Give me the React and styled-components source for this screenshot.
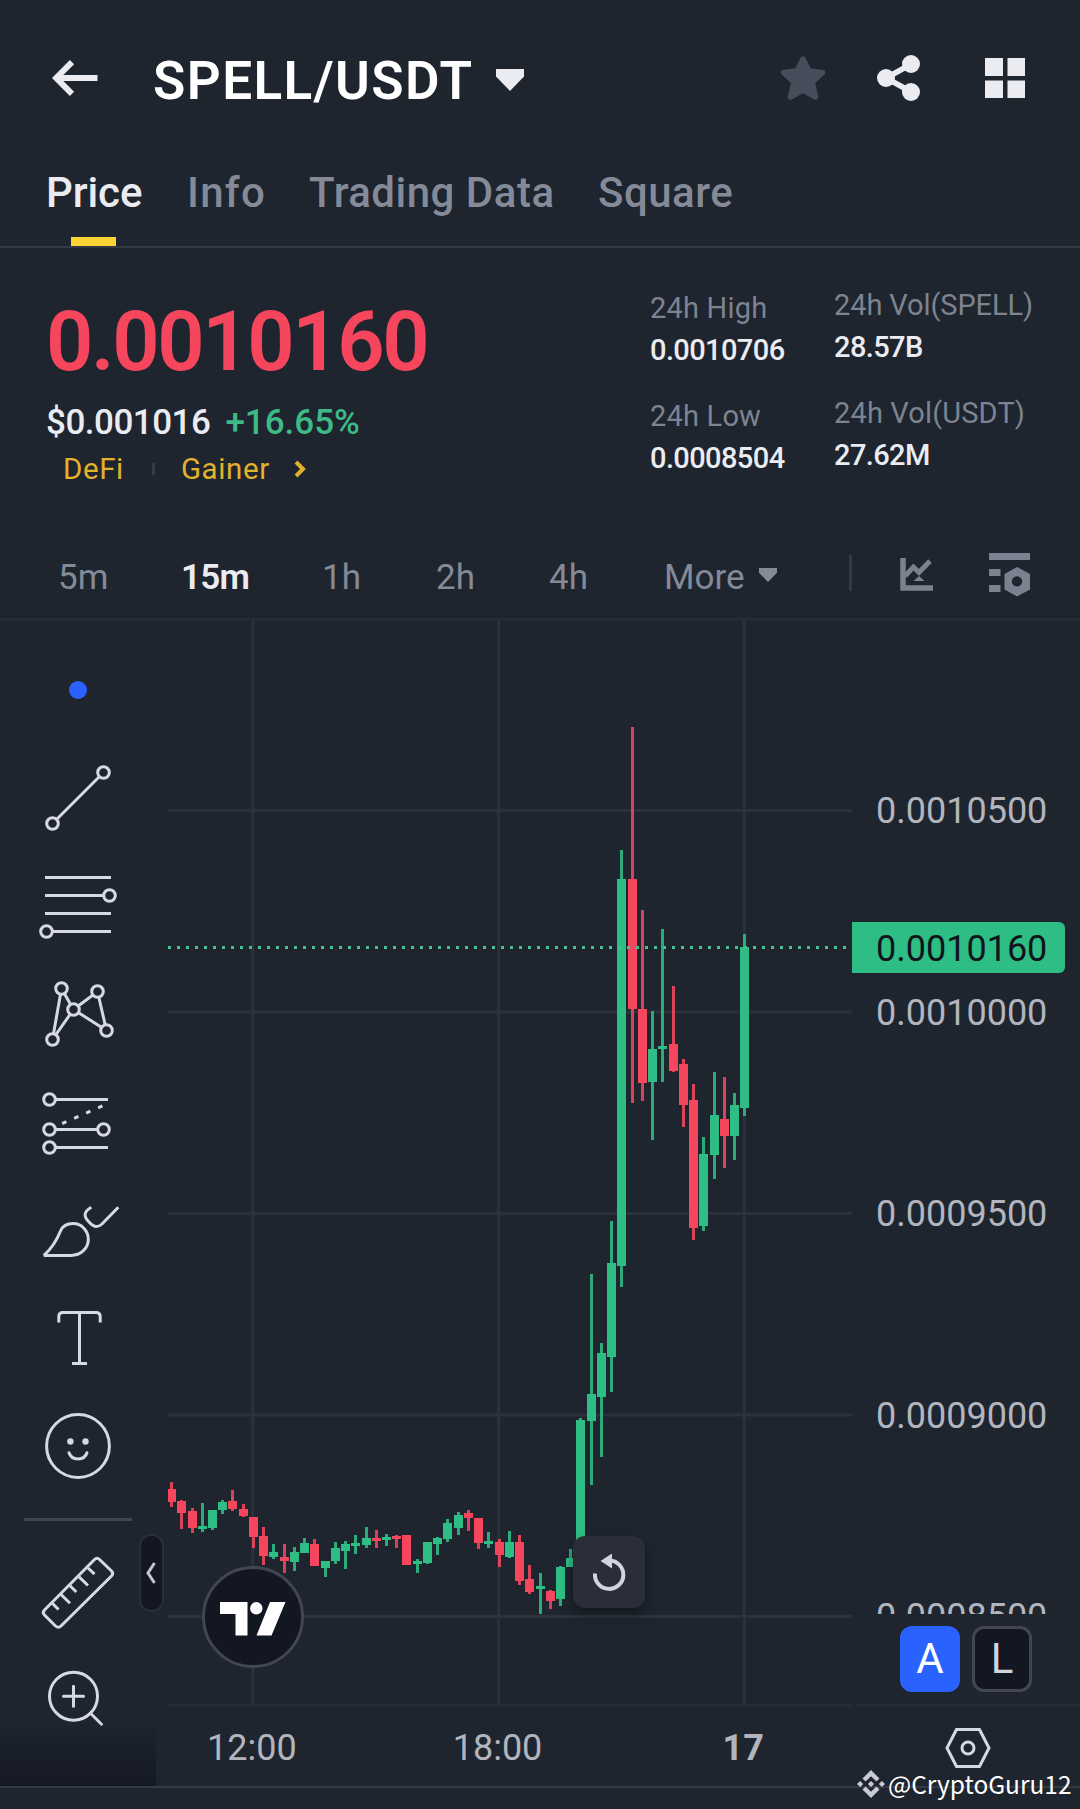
import React, { useState } from 'react';
import styled, { createGlobalStyle, css } from 'styled-components';

const GlobalStyle = createGlobalStyle`
    * { box-sizing: border-box; }
    body {
        margin: 0;
        background: #1e252f;
        font-family: Roboto, "Liberation Sans", sans-serif;
    }
`

const Page = styled.div`
    position: relative;
    width: 1080px;
    height: 1809px;
    overflow: hidden;
    background: #1e252f;
    color: #eaecf2;
`

/* ---------- header ---------- */

const Header = styled.header`
    display: flex;
    align-items: center;
    height: 156px;
    padding: 0 55px 0 52px;
`

const Pair = styled.h1`
    display: flex;
    align-items: center;
    gap: 23px;
    margin: 5px auto 0 55px;
    font-size: 53px;
    line-height: 62px;
    font-weight: 600;
    letter-spacing: 1.4px;
    color: #fff;

    svg { margin-bottom: 2px; }
`

const HeaderIcons = styled.div`
    display: flex;
    align-items: center;
`

const IconBox = styled.div`
    display: flex;
    margin-left: ${p => p.$gap || 0}px;
`

const Tabs = styled.nav`
    display: grid;
    grid-template-columns: 141px 122px 289px auto;
    justify-content: start;
    height: 92px;
    padding-left: 46px;
    border-bottom: 2px solid #343a45;
`

const Tab = styled.div`
    display: flex;
    flex-direction: column;
    align-items: flex-start;
    padding-top: 12px;
    font-size: 42px;
    line-height: 50px;
    font-weight: 500;
    letter-spacing: ${p => p.$ls || 0}px;
    color: ${p => p.$active ? '#eaecf2' : '#848a97'};
    white-space: nowrap;
    cursor: pointer;
`

const Indicator = styled.span`
    width: 45px;
    height: 9px;
    margin: auto 0 0 25px;
    background: #fcd535;
`

/* ---------- price summary ---------- */

const Summary = styled.section`
    display: flex;
    height: 286px;
`

const PriceBlock = styled.div`
    width: 650px;
    padding: 49px 0 0 46px;
`

const LastPrice = styled.div`
    font-size: 83px;
    line-height: 90px;
    font-weight: 600;
    letter-spacing: -2.4px;
    color: #f6465d;
`

const SubPrice = styled.div`
    display: flex;
    gap: 15px;
    margin-top: 14px;
    font-size: 35px;
    line-height: 44px;
    font-weight: 500;
`

const UsdPrice = styled.span`
    letter-spacing: -0.5px;
`

const Change = styled.span`
    color: #3dba86;
`

const TagRow = styled.div`
    display: flex;
    align-items: center;
    margin-top: 6px;
    padding-left: 17px;
    font-size: 29.5px;
    line-height: 36px;
    letter-spacing: 0.6px;
    color: #e3b22c;
`

const TagDivider = styled.i`
    width: 3px;
    height: 12px;
    margin: 0 26px 0 28px;
    background: #363c47;
`

const StatColumn = styled.dl`
    width: 184px;
    margin: 0;
    padding-top: ${p => p.$top}px;
    font-size: 29px;
    line-height: 42px;
    white-space: nowrap;
`

const StatLabel = styled.dt`
    letter-spacing: ${p => p.$ls || 0}px;
    color: #7d8390;
`

const StatValue = styled.dd`
    margin: 0 0 24px;
    font-weight: 500;
    letter-spacing: -0.6px;
    color: #eaecf2;
`

/* ---------- interval bar ---------- */

const IntervalBar = styled.div`
    display: grid;
    grid-template-columns: 123px 141px 114px 113px 115px 185px 51px 89px auto;
    align-items: center;
    justify-content: start;
    height: 87px;
    padding-left: 58px;
    border-bottom: 3px solid #262c37;

    > svg { margin-bottom: 3px; }
`

const Interval = styled.span`
    display: flex;
    align-items: center;
    gap: 14px;
    padding-top: 3px;
    font-size: 35px;
    line-height: 44px;
    color: #848a97;
    cursor: pointer;
    ${p => p.$active && css`
        font-weight: 600;
        letter-spacing: -0.8px;
        color: #eaecf2;
    `}

    svg { margin-bottom: 6px; }
`

const BarDivider = styled.i`
    width: 3px;
    height: 36px;
    margin-bottom: 6px;
    background: #343a45;
`

/* ---------- chart ---------- */

const ChartArea = styled.main`
    display: flex;
    height: 1167px;
    border-bottom: 2px solid #343a45;
`

const Toolbar = styled.aside`
    position: relative;
    width: 168px;
    height: 1165px;
    padding-top: 15px;
    overflow: hidden;
`

const Tool = styled.div`
    display: flex;
    align-items: center;
    justify-content: center;
    width: 156px;
    height: 108px;
`

const ToolDot = styled.span`
    width: 18px;
    height: 18px;
    border-radius: 50%;
    background: #2962ff;
`

const ToolDivider = styled.div`
    width: 108px;
    height: 3px;
    margin: 18px 24px;
    background: #434651;
`

const ToolFade = styled.div`
    position: absolute;
    left: 0;
    bottom: 0;
    width: 156px;
    height: 66px;
    background: linear-gradient(to bottom, rgba(19, 23, 34, 0), rgba(19, 23, 34, 0.9));
`

const CollapseHandle = styled.div`
    position: absolute;
    top: 913px;
    left: 139px;
    display: flex;
    align-items: center;
    justify-content: center;
    width: 25px;
    height: 78px;
    padding-right: 1px;
    border: 2px solid #2a2e39;
    border-radius: 12px;
    background: #131722;
`

const PlotColumn = styled.div`
    position: relative;
    width: 684px;
`

const Plot = styled.svg`
    display: block;
`

const TimeAxis = styled.div`
    display: flex;
    height: 82px;
    border-top: 3px solid #262c37;
`

const TimeLabel = styled.span`
    flex: none;
    width: 245.7px;
    padding-top: 2px;
    font-size: 36px;
    line-height: 79px;
    font-weight: ${p => p.$bold ? 700 : 400};
    text-align: center;
    color: #b2b5be;

    &:first-child { margin-left: -39px; }
`

const TvBadge = styled.div`
    position: absolute;
    top: 945px;
    left: 34px;
    display: flex;
    align-items: center;
    justify-content: center;
    width: 102px;
    height: 102px;
    padding-top: 3px;
    border: 3px solid #434651;
    border-radius: 50%;
    background: #131722;
`

const ResetButton = styled.div`
    position: absolute;
    top: 915px;
    left: 405px;
    width: 72px;
    height: 72px;
    border-radius: 12px;
    background: #2a2e39;
    box-shadow: 0 6px 12px rgba(0, 0, 0, 0.35);
`

const PriceAxis = styled.div`
    position: relative;
    width: 228px;
`

const PriceLabels = styled.div`
    height: 993px;
    padding-top: 90px;
    overflow: hidden;
`

const PriceLabel = styled.div`
    height: 201.6px;
    padding-left: 24px;
    font-size: 36px;
    line-height: 201.6px;
    color: #b2b5be;
`

const CurrentPrice = styled.div`
    position: absolute;
    top: 301px;
    left: 0;
    width: 213px;
    height: 51px;
    padding-left: 24px;
    border-radius: 0 6px 6px 0;
    font-size: 36px;
    line-height: 54px;
    color: #10151c;
    background: #2ebd85;
`

const ScaleButtons = styled.div`
    display: flex;
    gap: 12px;
    height: 90px;
    padding: 12px 0 0 48px;
`

const ScaleButton = styled.button`
    width: 60px;
    height: 66px;
    padding: 0;
    border: 3px solid ${p => p.$on ? '#2962ff' : '#434651'};
    border-radius: 12px;
    font: 42px/58px Roboto, sans-serif;
    color: ${p => p.$on ? '#fff' : '#d1d4dc'};
    background: ${p => p.$on ? '#2962ff' : '#131722'};
`

const AxisCorner = styled.div`
    display: flex;
    justify-content: center;
    height: 82px;
    margin-left: 3px;
    padding-top: 21px;
    border-top: 3px solid #262c37;
`

const Watermark = styled.div`
    position: absolute;
    top: 1767px;
    left: 857px;
    display: flex;
    align-items: center;
    gap: 3px;
    height: 34px;
    font-family: "Noto Sans CJK SC", "Noto Sans", sans-serif;
    font-size: 24.5px;
    line-height: 34px;
    white-space: nowrap;
    color: #fff;
`

// [wick top, body top, body bottom, wick bottom, up?], oldest first
const candles = [
    [1482, 1488.7, 1502.3, 1507, 0],
    [1500, 1501, 1513, 1529, 0],
    [1508, 1511, 1528, 1533, 0],
    [1503, 1526, 1529, 1532, 1],
    [1510, 1510, 1528, 1530.3, 1],
    [1500, 1502, 1510, 1514, 1],
    [1490, 1501, 1509, 1511, 0],
    [1504, 1509, 1516, 1517, 0],
    [1517, 1517, 1537, 1548, 0],
    [1527, 1536, 1556, 1565, 0],
    [1544, 1552, 1557, 1559, 1],
    [1544, 1557, 1560.7, 1573, 0],
    [1547, 1552, 1562, 1571, 1],
    [1538, 1543, 1553, 1553, 1],
    [1539, 1543.7, 1566, 1566, 0],
    [1561, 1561, 1568, 1577, 1],
    [1542, 1548, 1561, 1564, 1],
    [1541, 1544, 1551.3, 1569, 1],
    [1535, 1543, 1546, 1554, 1],
    [1527, 1538, 1545.3, 1548, 1],
    [1530, 1538, 1541, 1547.7, 0],
    [1534, 1537, 1540, 1546, 1],
    [1534.7, 1535.7, 1538.7, 1547.7, 0],
    [1535, 1535, 1565, 1565, 0],
    [1559, 1561, 1564, 1573, 1],
    [1542, 1542, 1563, 1564, 1],
    [1537, 1538.4, 1543.8, 1555, 1],
    [1519, 1523, 1539, 1542, 1],
    [1512, 1515, 1528, 1535, 1],
    [1510, 1513, 1518, 1531, 0],
    [1518, 1518, 1543, 1549, 0],
    [1532, 1541, 1544, 1548, 1],
    [1539, 1542, 1555, 1567, 0],
    [1531, 1542, 1557, 1558, 1],
    [1535, 1542, 1581, 1585, 0],
    [1565, 1579, 1591.5, 1593.7, 0],
    [1573, 1586, 1589, 1614, 1],
    [1590, 1591, 1601, 1609, 0],
    [1566, 1566.6, 1599, 1606, 1],
    [1549, 1558, 1567, 1567, 1],
    [1418, 1420, 1570, 1570, 1],
    [1274, 1394, 1421, 1485, 1],
    [1343, 1353, 1397, 1457, 1],
    [1221, 1263, 1357, 1392, 1],
    [850, 879, 1266, 1287, 1],
    [727, 879, 1009, 1103, 0],
    [910, 1009, 1083, 1101, 0],
    [1011, 1049, 1082, 1140, 1],
    [929, 1046, 1049, 1082, 1],
    [986, 1044, 1071, 1072, 0],
    [1059, 1064, 1105, 1127, 0],
    [1084, 1100, 1228, 1240, 0],
    [1137, 1154, 1226, 1231, 1],
    [1072, 1115, 1155, 1179, 1],
    [1077, 1118.5, 1136, 1168, 0],
    [1093, 1105, 1136, 1160, 1],
    [934, 947, 1108, 1116, 1],
];

const CANDLE_STEP = 10.235;
const LAST_X = 744.25;
const gridX = [252.8, 498.6, 744.2];
const gridY = [810.5, 1012, 1213.5, 1415, 1616.5];
const priceTicks = ['0.0010500', '0.0010000', '0.0009500', '0.0009000', '0.0008500'];

const tools = [
    'trend', 'fib', 'pattern', 'forecast', 'brush', 'text', 'smile',
];

const Node = ({ x, y }) => <circle cx={x} cy={y} r="5.8" fill="#1e252f" />;

const toolShapes = {
    trend: <>
        <path d="M67.5 16.5 16.5 67.5" />
        <Node x={67.5} y={16.5} /><Node x={16.5} y={67.5} />
    </>,
    fib: <>
        <path d="M9 13.5H75M9 31.5H73M9 49.5H75M10 67.5H75" />
        <Node x={73.5} y={31.5} /><Node x={10.5} y={67.5} />
    </>,
    pattern: <>
        <path d="M16.5 67.5 25.5 16.5 37.5 37.5 61.5 19.5 70.5 58.5 37.5 37.5Z" />
        <Node x={25.5} y={16.5} /><Node x={61.5} y={19.5} /><Node x={37.5} y={37.5} />
        <Node x={16.5} y={67.5} /><Node x={70.5} y={58.5} />
    </>,
    forecast: <>
        <path d="M13.5 19.5H72M13.5 49.5H67M13.5 67.5H72" />
        <path d="M26.2 43.6 68 25.2" strokeDasharray="4.6 8.5" />
        <Node x={13.5} y={19.5} /><Node x={13.5} y={49.5} />
        <Node x={67.5} y={49.5} /><Node x={13.5} y={67.5} />
    </>,
    brush: <>
        <path strokeLinejoin="bevel" d="M8 67.4H35C45 67.4 52.3 60 52.3 51.5 52.3 42.5 45.5 35.6 37 35.6 30 35.6 26.5 38.5 24.5 43 20.5 53 15 61 8 67.4Z" />
        <path d="M55.3 19.3C47 24 48 29 52.5 33.5 58 39.5 61.5 40 66 36L82.3 19.3" />
    </>,
    text: <path d="M22.8 26.5V20.5Q22.8 16.5 26.8 16.5H60Q64.2 16.5 64.2 20.5V26.5M43.5 16.5V67.5M36 67.5H51" />,
    smile: <>
        <circle cx="42" cy="42" r="31.4" />
        <circle cx="34.4" cy="37.5" r="3.2" fill="#d6d9e2" stroke="none" />
        <circle cx="49.5" cy="37.5" r="3.2" fill="#d6d9e2" stroke="none" />
        <path d="M33 48.8C35.5 57 48.5 57 51 48.8" strokeLinecap="round" />
    </>,
    ruler: <>
        <path strokeLinejoin="round" d="M58.5 8.5Q61 6 63.5 8.5L75.5 20Q78 22.5 75.5 25L25 75Q22.3 77.5 19.5 75L8.5 64Q6 61.5 8.5 59Z" />
        <path d="M16.3 52.2 22.5 58.5M25 43.5 34 52.3M34 34.7 40.3 41M43 25.8 52 34.5M52 17 58.5 23.2" />
    </>,
    zoom: <>
        <circle cx="37.5" cy="37.2" r="24" />
        <path d="M27.5 37.2H47.5M37.5 27.2V47.2M54.7 54.5 65.5 65.2" strokeLinecap="round" />
    </>,
};

function ToolIcon({ name }) {
    return (
        <Tool>
            <svg width="84" height="84" viewBox="0 0 84 84" fill="none" stroke="#d6d9e2" strokeWidth="3">
                {toolShapes[name]}
            </svg>
        </Tool>
    );
}

function Caret({ width, height, color }) {
    return (
        <svg width={width} height={height} viewBox="0 0 28 22" preserveAspectRatio="none">
            <path d="M0 0H28V7.5L14 22 0 7.5Z" fill={color} />
        </svg>
    );
}

function CandlePlot() {
    return (
        <Plot width="684" height="1083" viewBox="168 621 684 1083">
            <g stroke="#2b323d" strokeWidth="3">
                {gridX.map(x => <path key={x} d={`M${x} 621V1704`} />)}
                {gridY.map(y => <path key={y} d={`M168 ${y}H852`} />)}
            </g>
            {candles.map(([high, top, bottom, low, up], i) => {
                const x = Math.ceil(LAST_X - (candles.length - 1 - i) * CANDLE_STEP - 1.5);
                return (
                    <g key={i} fill={up ? '#2ebd85' : '#f6465d'} shapeRendering="crispEdges">
                        <rect x={x} y={high} width="3" height={low - high} opacity="0.88" />
                        <rect x={x - 3} y={top} width="9" height={bottom - top} />
                    </g>
                );
            })}
            <path d="M168 947.5H852" stroke="#45c08f" strokeWidth="3" strokeDasharray="3 6" />
        </Plot>
    );
}

export default function App() {
    const [tab, setTab] = useState('Price');
    const [interval, setActiveInterval] = useState('15m');

    return (
        <Page>
            <GlobalStyle />
            <Header>
                <svg width="46" height="36" viewBox="0 0 46 36" fill="none" stroke="#eaecf2" strokeWidth="6">
                    <path d="M45.5 18H5M20 2.2 4.2 18 20 33.8" />
                </svg>
                <Pair>
                    SPELL/USDT
                    <Caret width={28} height={22} color="#eaecf2" />
                </Pair>
                <HeaderIcons>
                    <IconBox>
                        <svg width="46" height="46" viewBox="0 0 46 46">
                            <path
                                d="M23 4 28.7 16 42.5 17.5 32.2 27 35.5 42 23 35 10.5 42 13.8 27 3.5 17.5 17.3 16Z"
                                fill="#474d5a" stroke="#474d5a" strokeWidth="5.5" strokeLinejoin="round"
                            />
                        </svg>
                    </IconBox>
                    <IconBox $gap={51}>
                        <svg width="43" height="46" viewBox="0 0 43 46" fill="#eaecf2">
                            <path d="M34.5 9 9 23 34.5 37" fill="none" stroke="#eaecf2" strokeWidth="5.5" />
                            <circle cx="34" cy="9" r="9" />
                            <circle cx="9" cy="23" r="9" />
                            <circle cx="34" cy="37" r="9" />
                        </svg>
                    </IconBox>
                    <IconBox $gap={65}>
                        <svg width="40" height="40" viewBox="0 0 40 40" fill="#eaecf2">
                            <path d="M0 0H18V18H0ZM22.5 0H40V18H22.5ZM0 22.5H18V40H0ZM22.5 22.5H40V40H22.5Z" />
                        </svg>
                    </IconBox>
                </HeaderIcons>
            </Header>

            <Tabs>
                {[['Price', -0.1], ['Info', 1.3], ['Trading Data', 0.5], ['Square', 0.5]].map(([name, ls]) => (
                    <Tab key={name} $ls={ls} $active={tab === name} onClick={() => setTab(name)}>
                        {name}
                        {tab === name && <Indicator />}
                    </Tab>
                ))}
            </Tabs>

            <Summary>
                <PriceBlock>
                    <LastPrice>0.0010160</LastPrice>
                    <SubPrice>
                        <UsdPrice>$0.001016</UsdPrice>
                        <Change>+16.65%</Change>
                    </SubPrice>
                    <TagRow>
                        <span>DeFi</span>
                        <TagDivider />
                        <span>Gainer</span>
                        <IconBox $gap={24}>
                            <svg width="13" height="18" viewBox="0 0 13 18" fill="none" stroke="#e3b22c" strokeWidth="4">
                                <path d="M2 2 9 9 2 16" />
                            </svg>
                        </IconBox>
                    </TagRow>
                </PriceBlock>
                <StatColumn $top={39}>
                    <StatLabel $ls={0.2}>24h High</StatLabel>
                    <StatValue>0.0010706</StatValue>
                    <StatLabel $ls={0.2}>24h Low</StatLabel>
                    <StatValue>0.0008504</StatValue>
                </StatColumn>
                <StatColumn $top={36}>
                    <StatLabel $ls={-0.1}>24h Vol(SPELL)</StatLabel>
                    <StatValue>28.57B</StatValue>
                    <StatLabel $ls={0.15}>24h Vol(USDT)</StatLabel>
                    <StatValue>27.62M</StatValue>
                </StatColumn>
            </Summary>

            <IntervalBar>
                {['5m', '15m', '1h', '2h', '4h'].map(name => (
                    <Interval key={name} $active={interval === name} onClick={() => setActiveInterval(name)}>
                        {name}
                    </Interval>
                ))}
                <Interval>
                    More
                    <Caret width={18} height={14} color="#848a97" />
                </Interval>
                <BarDivider />
                <svg width="33" height="34" viewBox="0 0 33 34" fill="none" stroke="#7b818e" strokeWidth="5.5">
                    <path d="M3 0V30H33" />
                    <path d="M5 18 13.5 9 19 14.5 30 3" strokeWidth="5" />
                    <path d="M13.5 23 19 18 24.5 23Z" fill="#7b818e" stroke="none" />
                </svg>
                <svg width="41" height="44" viewBox="0 0 41 44" fill="#7b818e">
                    <path d="M0 0H41V7H0ZM0 16H11.5V23H0ZM0 32H11.5V39H0Z" />
                    <path fillRule="evenodd" d="M28 14 41 21V36.5L28 43.5 15.5 36.5V21ZM28 23.2A5.2 5.2 0 1 0 28 33.6 5.2 5.2 0 1 0 28 23.2Z" />
                </svg>
            </IntervalBar>

            <ChartArea>
                <Toolbar>
                    <Tool><ToolDot /></Tool>
                    {tools.map(name => <ToolIcon key={name} name={name} />)}
                    <ToolDivider />
                    <ToolIcon name="ruler" />
                    <ToolIcon name="zoom" />
                    <ToolFade />
                    <CollapseHandle>
                        <svg width="12" height="24" viewBox="0 0 12 24" fill="none" stroke="#c4c7d0" strokeWidth="3">
                            <path d="M9.5 2 3 12 9.5 22" />
                        </svg>
                    </CollapseHandle>
                </Toolbar>

                <PlotColumn>
                    <CandlePlot />
                    <TimeAxis>
                        <TimeLabel>12:00</TimeLabel>
                        <TimeLabel>18:00</TimeLabel>
                        <TimeLabel $bold>17</TimeLabel>
                    </TimeAxis>
                    <TvBadge>
                        <svg width="66" height="34" viewBox="0 0 66 34" fill="#fff">
                            <path d="M0 0H27.5V33.5H15.5V12H0ZM50 0H65.5L51.5 33.5H36.5Z" />
                            <circle cx="36.3" cy="6.3" r="6.2" />
                        </svg>
                    </TvBadge>
                    <ResetButton>
                        <svg width="72" height="72" viewBox="0 0 72 72" fill="none" stroke="#d1d4dc" strokeWidth="4">
                            <path d="M22 37.5A14.2 14.2 0 1 0 36.5 24.5" />
                            <path d="M27.5 25 39 17.5V32.5Z" fill="#d1d4dc" stroke="none" />
                        </svg>
                    </ResetButton>
                </PlotColumn>

                <PriceAxis>
                    <PriceLabels>
                        {priceTicks.map(p => <PriceLabel key={p}>{p}</PriceLabel>)}
                    </PriceLabels>
                    <CurrentPrice>0.0010160</CurrentPrice>
                    <ScaleButtons>
                        <ScaleButton $on>A</ScaleButton>
                        <ScaleButton>L</ScaleButton>
                    </ScaleButtons>
                    <AxisCorner>
                        <svg width="46" height="40" viewBox="0 0 46 40" fill="none" stroke="#d6d9e2" strokeWidth="3">
                            <path d="M11.5 1.5H34.5L44 20 34.5 38.5H11.5L2 20Z" />
                            <circle cx="23" cy="20" r="6" />
                        </svg>
                    </AxisCorner>
                </PriceAxis>
            </ChartArea>

            <Watermark>
                <svg width="28" height="28" viewBox="0 0 28 28" fill="#c9ccd5">
                    <path d="M14 0 22.5 8.5 19.4 11.6 14 6.2 8.6 11.6 5.5 8.5ZM14 28 22.5 19.5 19.4 16.4 14 21.8 8.6 16.4 5.5 19.5Z" />
                    <path d="M14 10.9 17.1 14 14 17.1 10.9 14ZM3.1 10.9 6.2 14 3.1 17.1 0 14ZM24.9 10.9 28 14 24.9 17.1 21.8 14Z" />
                </svg>
                @CryptoGuru12
            </Watermark>
        </Page>
    );
}
